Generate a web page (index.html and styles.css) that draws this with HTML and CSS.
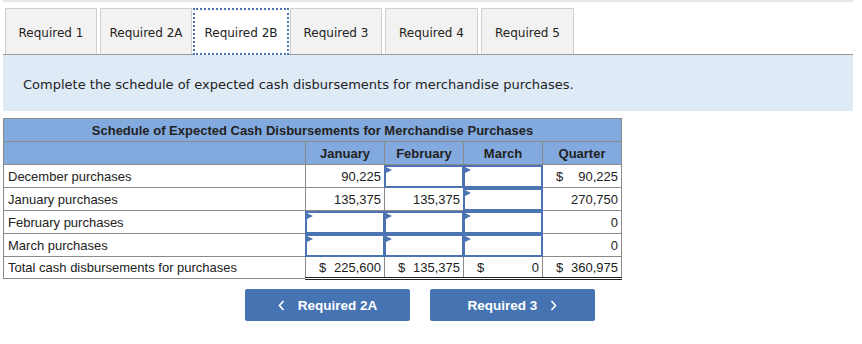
FILE: index.html
```html
<!DOCTYPE html>
<html>
<head>
<meta charset="utf-8">
<link rel="stylesheet" href="styles.css">
</head>
<body>
<div class="page">
  <div class="tabs">
    <div class="tab w92">Required 1</div>
    <div class="tab w92">Required 2A</div>
    <div class="tab active">Required 2B</div>
    <div class="tab w92">Required 3</div>
    <div class="tab w93">Required 4</div>
    <div class="tab w93">Required 5</div>
  </div>
  <div class="panel">Complete the schedule of expected cash disbursements for merchandise purchases.</div>
  <table class="sched">
    <colgroup><col class="c-lab"><col class="c-num"><col class="c-num"><col class="c-num"><col class="c-num"></colgroup>
    <tr class="title"><th colspan="5">Schedule of Expected Cash Disbursements for Merchandise Purchases</th></tr>
    <tr class="head"><th class="lab"></th><th>January</th><th>February</th><th>March</th><th>Quarter</th></tr>
    <tr>
      <td class="lab">December purchases</td>
      <td class="num">90,225</td>
      <td class="in"><div class="box"></div></td>
      <td class="in"><div class="box"></div></td>
      <td class="num"><span class="cur">$</span><span>90,225</span></td>
    </tr>
    <tr>
      <td class="lab">January purchases</td>
      <td class="num">135,375</td>
      <td class="num">135,375</td>
      <td class="in"><div class="box"></div></td>
      <td class="num">270,750</td>
    </tr>
    <tr>
      <td class="lab">February purchases</td>
      <td class="in"><div class="box"></div></td>
      <td class="in"><div class="box"></div></td>
      <td class="in"><div class="box"></div></td>
      <td class="num">0</td>
    </tr>
    <tr>
      <td class="lab">March purchases</td>
      <td class="in"><div class="box"></div></td>
      <td class="in"><div class="box"></div></td>
      <td class="in"><div class="box"></div></td>
      <td class="num">0</td>
    </tr>
    <tr class="total">
      <td class="lab">Total cash disbursements for purchases</td>
      <td class="num tot"><span class="cur">$</span><span>225,600</span></td>
      <td class="num tot"><span class="cur">$</span><span>135,375</span></td>
      <td class="num tot"><span class="cur">$</span><span>0</span></td>
      <td class="num tot"><span class="cur">$</span><span>360,975</span></td>
    </tr>
  </table>
  <div class="nav">
    <div class="btn"><svg class="chev" width="7" height="11" viewBox="0 0 7 11"><polyline points="5.5,1 1.5,5.5 5.5,10" fill="none" stroke="#fff" stroke-width="1.6"/></svg>Required 2A</div>
    <div class="btn">Required 3<svg class="chev r" width="7" height="11" viewBox="0 0 7 11"><polyline points="1.5,1 5.5,5.5 1.5,10" fill="none" stroke="#fff" stroke-width="1.6"/></svg></div>
  </div>
</div>
</body>
</html>
```
FILE: styles.css
```css
html, body { margin: 0; padding: 0; background: #fff; }
.page { width: 850px; margin-left: 3px; border-top: 2px solid #e8e8e8; }
.tabs {
  display: flex; gap: 3px; padding: 6px 0 0 2px;
  border-bottom: 1px solid #9a9a9a; height: 46px;
}
.tab {
  box-sizing: border-box; height: 46px; width: 92px; padding-top: 2px;
  background: #f2f2f2; border: 1px solid #cfcfcf; border-bottom: none;
  font-family: "DejaVu Sans", Verdana, sans-serif; font-size: 12px; color: #222;
  display: flex; align-items: center; justify-content: center;
}
.tab.w92 { width: 92px; }
.tab.w93 { width: 93px; }
.tab.active {
  width: 96px; background: #fff; height: 47px; margin: 0 -2px -1px -2px;
  border: 2px dotted #4a73b5;
}
.panel {
  background: #dfeaf7; height: 56px; box-sizing: border-box;
  padding: 3px 0 0 20px; display: flex; align-items: center;
  font-family: "DejaVu Sans", Verdana, sans-serif; font-size: 13px; color: #222;
}
.sched {
  margin-top: 7px; border-collapse: collapse; width: 619px; table-layout: fixed;
  font-family: "Liberation Sans", Arial, sans-serif; font-size: 13px; color: #222;
}
.sched col.c-lab { width: 302px; }
.sched col.c-num { width: 79px; }
.sched th, .sched td { border: 1px solid #8a8a8a; height: 23px; box-sizing: border-box; padding: 0 4px; white-space: nowrap; }
.sched .title th { background: #82aadf; font-weight: bold; text-align: center; height: 23px; padding-top: 1px; }
.sched .head th { background: #82aadf; font-weight: bold; text-align: center; }
.sched td.lab { text-align: left; }
.sched td.num { text-align: right; padding-right: 3px; }
.sched td.num span:not(.cur) { float: right; }
.sched td.num .cur { float: left; padding-left: 9px; }
.sched td.in { padding: 0; }
.box {
  box-sizing: border-box; height: 23px; margin: -1px; border: 2px solid #4c74b2; background: #fff;
  position: relative;
}
.box::before {
  content: ""; position: absolute; left: 0; top: 0;
  border-left: 6px solid #4c74b2; border-top: 3px solid transparent; border-bottom: 3px solid transparent;
}
.sched tr.total td { height: 22px; }
.sched tr.total td.tot { border-top: 1px solid #222; border-bottom: 3px double #222; }
.nav { display: flex; gap: 20px; padding: 9px 0 0 242px; }
.btn {
  width: 165px; height: 32px; box-sizing: border-box; background: #4674b3; border-radius: 2px;
  color: #fff; font-family: "Liberation Sans", Arial, sans-serif; font-weight: bold; font-size: 13.5px;
  display: flex; align-items: center; justify-content: center;
}
.chev { margin-right: 13px; }
.chev.r { margin-right: 0; margin-left: 13px; }
```
